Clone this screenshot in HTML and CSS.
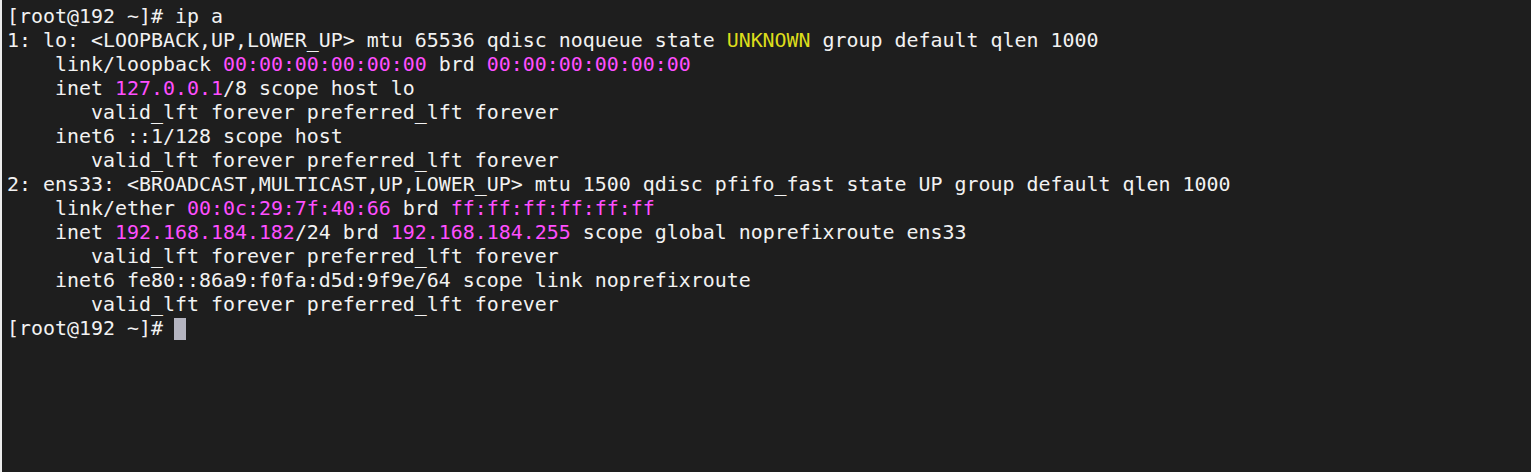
FILE: index.html
```html
<!DOCTYPE html>
<html lang="en">
<head>
    <meta charset="UTF-8">
    <title>root@192</title>
    <link rel="stylesheet" href="styles.css">
</head>
<body>
    <div class="terminal">
<div class="line">[root@192 ~]# ip a</div>
<div class="line">1: lo: &lt;LOOPBACK,UP,LOWER_UP&gt; mtu 65536 qdisc noqueue state <span class="yellow">UNKNOWN</span> group default qlen 1000</div>
<div class="line">    link/loopback <span class="pink">00:00:00:00:00:00</span> brd <span class="pink">00:00:00:00:00:00</span></div>
<div class="line">    inet <span class="pink">127.0.0.1</span>/8 scope host lo</div>
<div class="line">       valid_lft forever preferred_lft forever</div>
<div class="line">    inet6 ::1/128 scope host</div>
<div class="line">       valid_lft forever preferred_lft forever</div>
<div class="line">2: ens33: &lt;BROADCAST,MULTICAST,UP,LOWER_UP&gt; mtu 1500 qdisc pfifo_fast state UP group default qlen 1000</div>
<div class="line">    link/ether <span class="pink">00:0c:29:7f:40:66</span> brd <span class="pink">ff:ff:ff:ff:ff:ff</span></div>
<div class="line">    inet <span class="pink">192.168.184.182</span>/24 brd <span class="pink">192.168.184.255</span> scope global noprefixroute ens33</div>
<div class="line">       valid_lft forever preferred_lft forever</div>
<div class="line">    inet6 fe80::86a9:f0fa:d5d:9f9e/64 scope link noprefixroute</div>
<div class="line">       valid_lft forever preferred_lft forever</div>
<div class="line">[root@192 ~]# <span class="cursor"> </span></div>
    </div>
</body>
</html>
```
FILE: styles.css
```css
html, body {
    margin: 0;
    height: 100%;
    background-color: #1e1e1e;
}
.terminal {
    box-sizing: border-box;
    height: 100%;
    border-left: 2px solid #ececec;
    padding: 5px 0 0 5px;
    font-family: 'DejaVu Sans Mono', 'Liberation Mono', monospace;
    font-size: 19.93px;
    line-height: 24px;
    color: #f2f2f2;
}
.line {
    white-space: pre;
    height: 24px;
}
.pink {
    color: #ff4fff;
}
.yellow {
    color: #dcdc1c;
}
.cursor {
    display: inline-block;
    width: 12px;
    height: 22px;
    vertical-align: top;
    margin-top: 1px;
    margin-left: -1px;
    background-color: #b4b4c0;
}
```
